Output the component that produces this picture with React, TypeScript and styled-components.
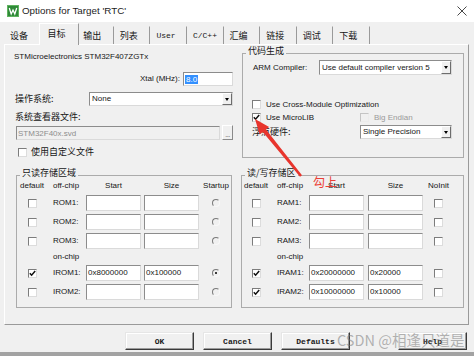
import React from 'react'
import styled, { createGlobalStyle } from 'styled-components'

const GlobalStyle = createGlobalStyle`
  html, body {
    margin: 0;
    padding: 0;
    background: #f0f0f0;
  }
  body {
    font-family: 'Liberation Sans', Arial, 'Noto Sans CJK SC', sans-serif;
    font-size: 8px;
    line-height: 10px;
    color: #161616;
  }
`

const Window = styled.div`
  position: relative;
  width: 474px;
  height: 356px;
  overflow: hidden;
  background: #f0f0f0;
  display: flex;
  flex-direction: column;
`

const TitleBar = styled.div`
  flex: none;
  height: 22px;
  background: #fff;
  display: flex;
  align-items: center;
  padding: 0 7px;
  gap: 3px;
`

const Title = styled.span`
  flex: 1;
  font-size: 9.8px;
  color: #1c1c1c;
`

const TabStrip = styled.div`
  flex: none;
  height: 22px;
  display: flex;
  align-items: flex-end;
  padding-left: 4px;
  position: relative;
  z-index: 1;
`

const Tab = styled.div<{ $active?: boolean; $mono?: boolean }>`
  box-sizing: border-box;
  width: ${(p) => (p.$active ? 40.6 : 36.6)}px;
  height: ${(p) => (p.$active ? 22 : 18)}px;
  margin: ${(p) => (p.$active ? '0 -2px -1px' : '0')};
  padding: ${(p) => (p.$active ? '5px 0 0 8px' : '4px 0 0 5px')};
  border-right: 1px solid #9a9a9a;
  border-top: 1px solid ${(p) => (p.$active ? '#fff' : 'transparent')};
  border-left: 1px solid ${(p) => (p.$active ? '#fff' : 'transparent')};
  background: #f0f0f0;
  position: relative;
  z-index: ${(p) => (p.$active ? 2 : 1)};
  font-family: ${(p) =>
    p.$mono ? "'Liberation Mono', monospace" : "'Noto Sans CJK SC', sans-serif"};
  font-size: ${(p) => (p.$mono ? 8 : 9)}px;
  line-height: 10px;
  white-space: nowrap;
`

const Panel = styled.div`
  flex: none;
  box-sizing: border-box;
  height: 281px;
  margin: 0 5px 0 4px;
  padding: 0 4px 0 9px;
  border: 1px solid;
  border-color: #fff #9a9a9a #9a9a9a #fff;
`

const TopSection = styled.div`
  display: grid;
  grid-template-columns: 219px 222px;
  column-gap: 9px;
  align-items: start;
`

const BottomSection = styled.div`
  display: grid;
  grid-template-columns: 216px 223px;
  column-gap: 9px;
  margin: 9px 0 0 2px;
`

const LeftColumn = styled.div`
  display: flex;
  flex-direction: column;
  padding-top: 7px;
`

const Cjk = styled.span`
  font-family: 'Noto Sans CJK SC', sans-serif;
  font-size: 9px;
  line-height: 10px;
  white-space: nowrap;
`

const DeviceName = styled.div`
  height: 10px;
`

const XtalRow = styled.div`
  margin-top: 10px;
  display: flex;
  justify-content: flex-end;
  align-items: center;
  gap: 3px;
`

const FormRow = styled.div<{ $top: number; $inset?: number }>`
  margin-top: ${(p) => p.$top}px;
  padding-left: ${(p) => p.$inset ?? 0}px;
  display: flex;
  align-items: center;
`

const RowLabel = styled.span<{ $w: number; $cjk?: boolean }>`
  width: ${(p) => p.$w}px;
  flex: none;
  padding-left: 1px;
  box-sizing: border-box;
  white-space: nowrap;
  ${(p) =>
    p.$cjk
      ? `font-family: 'Noto Sans CJK SC', sans-serif; font-size: 9px;`
      : ''}
`

const Field = styled.div<{ $h?: number; $w?: number; $disabled?: boolean }>`
  box-sizing: border-box;
  height: ${(p) => p.$h ?? 16}px;
  ${(p) => (p.$w ? `width: ${p.$w}px;` : 'flex: 1;')}
  padding: 1px 1px 0;
  background: ${(p) => (p.$disabled ? '#f0f0f0' : '#fff')};
  color: ${(p) => (p.$disabled ? '#8d8d8d' : '#161616')};
  border: 1px solid;
  border-color: #8c8c8c #dadada #dadada #8c8c8c;
  line-height: 11px;
  white-space: nowrap;
  overflow: hidden;
`

const Selected = styled.span`
  background: #3390ff;
  color: #fff;
  padding: 0 1px;
`

const Select = styled.div<{ $w: number; $h?: number }>`
  box-sizing: border-box;
  width: ${(p) => p.$w}px;
  height: ${(p) => p.$h ?? 15}px;
  flex: none;
  display: flex;
  align-items: center;
  padding-left: 2px;
  background: #fff;
  border: 1px solid;
  border-color: #8c8c8c #dadada #dadada #8c8c8c;
  white-space: nowrap;
`

const DropButton = styled.span`
  margin-left: auto;
  box-sizing: border-box;
  width: 10px;
  height: 100%;
  flex: none;
  background: #f0f0f0;
  border: 1px solid;
  border-color: #fff #6d6d6d #6d6d6d #fff;
  display: flex;
  align-items: center;
  justify-content: center;

  &::after {
    content: '';
    border-left: 2.5px solid transparent;
    border-right: 2.5px solid transparent;
    border-top: 3px solid #000;
  }
`

const BrowseButton = styled.span`
  box-sizing: border-box;
  width: 11px;
  height: 15px;
  flex: none;
  margin-left: 2px;
  background: #f0f0f0;
  border: 1px solid;
  border-color: #fff #8a8a8a #8a8a8a #fff;
  display: flex;
  align-items: flex-end;
  justify-content: center;
  font-size: 7px;
  line-height: 8px;
  color: #555;
  letter-spacing: -0.5px;
`

const CheckItem = styled.label<{ $disabled?: boolean; $gap?: number }>`
  display: flex;
  align-items: center;
  gap: ${(p) => p.$gap ?? 5}px;
  white-space: nowrap;
  color: ${(p) => (p.$disabled ? '#9a9a9a' : 'inherit')};
`

const CheckBox = styled.span<{ $disabled?: boolean }>`
  box-sizing: border-box;
  width: 9px;
  height: 9px;
  flex: none;
  background: ${(p) => (p.$disabled ? '#f0f0f0' : '#fff')};
  border: 1px solid;
  border-color: ${(p) =>
    p.$disabled ? '#c4c4c4 #ececec #ececec #c4c4c4' : '#7c7c7c #dcdcdc #dcdcdc #7c7c7c'};
  display: inline-flex;
  align-items: center;
  justify-content: center;
`

const Check = ({ checked, disabled }: { checked?: boolean; disabled?: boolean }) => (
  <CheckBox $disabled={disabled}>
    {checked && (
      <svg width="7" height="7" viewBox="0 0 7 7">
        <path d="M0.8 3.2 L2.6 5.2 L6.2 1" fill="none" stroke="#111" strokeWidth="1.5" />
      </svg>
    )}
  </CheckBox>
)

const Radio = styled.span<{ $on?: boolean }>`
  box-sizing: border-box;
  width: 8px;
  height: 8px;
  border-radius: 50%;
  border: 1px solid;
  border-color: #7a7a7a #f8f8f8 #f8f8f8 #7a7a7a;
  justify-self: center;
  display: flex;
  align-items: center;
  justify-content: center;

  &::after {
    content: '';
    width: 2px;
    height: 2px;
    border-radius: 50%;
    background: ${(p) => (p.$on ? '#000' : 'transparent')};
  }
`

const Group = styled.fieldset`
  margin: 0;
  padding: 0;
  min-width: 0;
  border: 1px solid #ababab;
`

const Legend = styled.legend`
  margin-left: 3px;
  padding: 0 2px 6px;
  font-family: 'Noto Sans CJK SC', sans-serif;
  font-size: 9px;
  line-height: 11px;
`

const CompilerRow = styled.div`
  height: 15px;
  margin-top: -2px;
  padding-left: 9px;
  display: flex;
  align-items: center;
`

const OptionGrid = styled.div`
  display: grid;
  grid-template-columns: 108px 92px;
  grid-template-rows: 11px 11px 14px;
  row-gap: 2px;
  align-items: center;
  margin-top: 24px;
  padding: 0 0 18px 9px;
`

const MemGrid = styled.div<{ $cols: string; $gap: number }>`
  display: grid;
  grid-template-columns: ${(p) => p.$cols};
  grid-template-rows: 13px 16px 16px 16px 10px 16px 16px;
  column-gap: ${(p) => p.$gap}px;
  row-gap: 3px;
  align-items: center;
  margin-top: -5px;
  padding: 0 0 7px 1px;
`

const HeadCell = styled.span<{ $left?: boolean }>`
  text-align: ${(p) => (p.$left ? 'left' : 'center')};
  padding-left: ${(p) => (p.$left ? 4 : 0)}px;
  white-space: nowrap;
`

const CellCenter = styled.span`
  display: flex;
  justify-content: center;
`

const MemLabel = styled.span<{ $bottom?: boolean }>`
  padding-left: 4px;
  white-space: nowrap;
  align-self: ${(p) => (p.$bottom ? 'end' : 'center')};
`

const Footer = styled.div`
  flex: none;
  box-sizing: border-box;
  height: 27px;
  padding: 7px 7px 0 125px;
  display: flex;
  align-items: flex-start;
  gap: 9px;
`

const Button = styled.button<{ $push?: boolean }>`
  width: 69px;
  height: 18px;
  padding: 0;
  margin-left: ${(p) => (p.$push ? 'auto' : '0')};
  background: #f0f0f0;
  border: 1px solid;
  border-color: #e6e6e6 #3a3a3a #3a3a3a #e6e6e6;
  box-shadow: inset -1px -1px 0 #9c9c9c, inset 1px 1px 0 #fff;
  font-family: 'Liberation Mono', monospace;
  font-weight: bold;
  font-size: 8px;
  color: #1a1a1a;
`

const BottomStrip = styled.div`
  flex: none;
  height: 4px;
  background: #a2a2a2;
`

const Overlay = styled.svg`
  position: absolute;
  left: 0;
  top: 0;
  pointer-events: none;
`

const Note = styled.span`
  position: absolute;
  left: 313px;
  top: 175px;
  color: #ec3f36;
  font-family: 'Noto Sans CJK SC', sans-serif;
  font-size: 12px;
  line-height: 14px;
`

const Watermark = styled.span`
  position: absolute;
  left: 337px;
  top: 332px;
  color: rgba(120, 120, 120, 0.55);
  font-family: 'Noto Sans CJK SC', sans-serif;
  font-size: 14.5px;
  line-height: 16px;
  white-space: nowrap;
`

type Row = { name: string; checked?: boolean; start?: string; size?: string; on?: boolean }

const MemoryGroup = ({
  title,
  cols,
  gap,
  lastHead,
  radio,
  offChip,
  onChip,
}: {
  title: string
  cols: string
  gap: number
  lastHead: string
  radio?: boolean
  offChip: Row[]
  onChip: Row[]
}) => {
  const renderRow = (r: Row) => (
    <React.Fragment key={r.name}>
      <CellCenter>
        <Check checked={r.checked} />
      </CellCenter>
      <MemLabel>{r.name}:</MemLabel>
      <Field>{r.start}</Field>
      <Field>{r.size}</Field>
      {radio ? (
        <Radio $on={r.on} />
      ) : (
        <CellCenter>
          <Check />
        </CellCenter>
      )}
    </React.Fragment>
  )

  return (
    <Group>
      <Legend>{title}</Legend>
      <MemGrid $cols={cols} $gap={gap}>
        <HeadCell>default</HeadCell>
        <HeadCell $left>off-chip</HeadCell>
        <HeadCell>Start</HeadCell>
        <HeadCell>Size</HeadCell>
        <HeadCell>{lastHead}</HeadCell>
        {offChip.map(renderRow)}
        <span />
        <MemLabel $bottom>on-chip</MemLabel>
        <span />
        <span />
        <span />
        {onChip.map(renderRow)}
      </MemGrid>
    </Group>
  )
}

const tabs = [
  { label: '设备' },
  { label: '目标', active: true },
  { label: '输出' },
  { label: '列表' },
  { label: 'User', mono: true },
  { label: 'C/C++', mono: true },
  { label: '汇编' },
  { label: '链接' },
  { label: '调试' },
  { label: '下载' },
]

const App = () => {
  return (
    <Window>
      <GlobalStyle />
      <TitleBar>
        <svg width="12" height="12" viewBox="0 0 12 12">
          <rect x="0.5" y="0.5" width="11" height="11" fill="#2f8a38" stroke="#5fb35f" />
          <path d="M2.3 3 L4.2 9 L6 5 L7.8 9 L9.7 3" fill="none" stroke="#fff" strokeWidth="1.3" />
        </svg>
        <Title>Options for Target 'RTC'</Title>
        <svg width="10" height="10" viewBox="0 0 10 10">
          <path d="M0.5 0.5 L9.5 9.5 M9.5 0.5 L0.5 9.5" stroke="#333" strokeWidth="0.9" />
        </svg>
      </TitleBar>

      <TabStrip>
        {tabs.map((t) => (
          <Tab key={t.label} $active={t.active} $mono={t.mono}>
            {t.label}
          </Tab>
        ))}
      </TabStrip>

      <Panel>
        <TopSection>
          <LeftColumn>
            <DeviceName>STMicroelectronics STM32F407ZGTx</DeviceName>
            <XtalRow>
              <span>Xtal (MHz):</span>
              <Field $h={14} $w={50}>
                <Selected>8.0</Selected>
              </Field>
            </XtalRow>
            <FormRow $top={6}>
              <RowLabel $w={75} $cjk>
                操作系统:
              </RowLabel>
              <Select $w={144} $h={14}>
                None
                <DropButton />
              </Select>
            </FormRow>
            <FormRow $top={6}>
              <RowLabel $w={120} $cjk>
                系统查看器文件:
              </RowLabel>
            </FormRow>
            <FormRow $top={3} $inset={2}>
              <Field $h={14} $disabled>
                STM32F40x.svd
              </Field>
              <BrowseButton>...</BrowseButton>
            </FormRow>
            <FormRow $top={7} $inset={4}>
              <CheckItem $gap={4}>
                <Check />
                <Cjk>使用自定义文件</Cjk>
              </CheckItem>
            </FormRow>
          </LeftColumn>

          <Group>
            <Legend>代码生成</Legend>
            <CompilerRow>
              <RowLabel $w={67}>ARM Compiler:</RowLabel>
              <Select $w={133}>
                Use default compiler version 5
                <DropButton />
              </Select>
            </CompilerRow>
            <OptionGrid>
              <CheckItem>
                <Check />
                Use Cross-Module Optimization
              </CheckItem>
              <span />
              <CheckItem>
                <Check checked />
                Use MicroLIB
              </CheckItem>
              <CheckItem $disabled>
                <Check disabled />
                Big Endian
              </CheckItem>
              <Cjk>浮点硬件:</Cjk>
              <Select $w={92} $h={14}>
                Single Precision
                <DropButton />
              </Select>
            </OptionGrid>
          </Group>
        </TopSection>

        <BottomSection>
          <MemoryGroup
            title="只读存储区域"
            cols="28px 34px 55px 55px 28px"
            gap={3}
            lastHead="Startup"
            radio
            offChip={[{ name: 'ROM1' }, { name: 'ROM2' }, { name: 'ROM3' }]}
            onChip={[
              { name: 'IROM1', checked: true, start: '0x8000000', size: '0x100000', on: true },
              { name: 'IROM2' },
            ]}
          />
          <MemoryGroup
            title="读/写存储区"
            cols="26px 32px 55px 55px 23px"
            gap={4}
            lastHead="NoInit"
            offChip={[{ name: 'RAM1' }, { name: 'RAM2' }, { name: 'RAM3' }]}
            onChip={[
              { name: 'IRAM1', checked: true, start: '0x20000000', size: '0x20000' },
              { name: 'IRAM2', checked: true, start: '0x10000000', size: '0x10000' },
            ]}
          />
        </BottomSection>
      </Panel>

      <Footer>
        <Button>OK</Button>
        <Button>Cancel</Button>
        <Button>Defaults</Button>
        <Button $push>Help</Button>
      </Footer>
      <BottomStrip />

      <Overlay width="474" height="356" viewBox="0 0 474 356">
        <polygon
          points="255,119 269.1,126.9 266,129.4 302,175.2 300,176.8 262.8,132 259.7,134.5"
          fill="#e8352d"
        />
      </Overlay>
      <Note>勾上</Note>
      <Watermark>CSDN @相逢只道是</Watermark>
    </Window>
  )
}

export default App
